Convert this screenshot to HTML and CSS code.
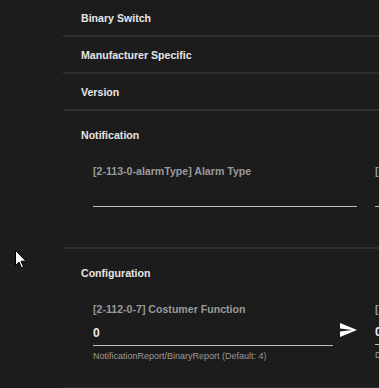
FILE: index.html
```html
<!DOCTYPE html>
<html>
<head>
<meta charset="utf-8">
<link rel="stylesheet" href="styles.css">
</head>
<body>
<div class="page">
  <div class="sidebar"></div>
  <div class="panel">
    <div class="row">Binary Switch</div>
    <div class="row">Manufacturer Specific</div>
    <div class="row">Version</div>
    <div class="section section-first">
      <div class="title">Notification</div>
      <div class="fields">
        <div class="field">
          <div class="label">[2-113-0-alarmType] Alarm Type</div>
          <div class="control"><div class="input"></div></div>
          <div class="helper"></div>
        </div>
        <div class="field">
          <div class="label">[2-113-0-alarmLevel] Alarm Level</div>
          <div class="control"><div class="input"></div></div>
          <div class="helper"></div>
        </div>
      </div>
    </div>
    <div class="section">
      <div class="title">Configuration</div>
      <div class="fields">
        <div class="field">
          <div class="label">[2-112-0-7] Costumer Function</div>
          <div class="control">
            <div class="input">0</div>
            <button class="send" aria-label="send">
              <svg viewBox="2 3 21 18" width="17" height="14" preserveAspectRatio="none"><path d="M2.01 21L23 12 2.01 3 2 10l15 2-15 2z" fill="#fff"/></svg>
            </button>
          </div>
          <div class="helper">NotificationReport/BinaryReport (Default: 4)</div>
        </div>
        <div class="field">
          <div class="label">[2-112-0-8] Other Function</div>
          <div class="control">
            <div class="input">0</div>
          </div>
          <div class="helper">Default: 0</div>
        </div>
      </div>
    </div>
  </div>
</div>
<svg class="cursor" width="13" height="19" viewBox="0 0 13 19"><path d="M0.5 0.5 L0.5 15.5 L4 12 L6.5 18 L8.5 17 L6 11.2 L11 11.2 Z" fill="#fff" stroke="#000" stroke-width="1"/></svg>
</body>
</html>
```
FILE: styles.css
```css
html, body {
  margin: 0;
  padding: 0;
  background: #1c1c1c;
  overflow: hidden;
}
body {
  font-family: "Liberation Sans", Arial, sans-serif;
  color: #e6e6e6;
  width: 379px;
  height: 388px;
  position: relative;
}
.page {
  display: flex;
}
.sidebar {
  width: 63px;
  flex: none;
}
.panel {
  flex: none;
  width: 700px;
}
.row {
  height: 35px;
  display: flex;
  align-items: center;
  padding-left: 18px;
  font-size: 10.6px;
  font-weight: bold;
  border-bottom: 2px solid #2e2e2e;
}
.section {
  padding: 17px 0 25px 18px;
  border-bottom: 2px solid #2e2e2e;
}
.section-first {
  padding-bottom: 24px;
}
.title {
  font-size: 10.6px;
  font-weight: bold;
  line-height: 14px;
}
.fields {
  display: flex;
  gap: 18px;
  margin-top: 22px;
  padding-left: 12px;
}
.field {
  width: 264px;
  flex: none;
}
.label {
  font-size: 10.6px;
  font-weight: bold;
  line-height: 14px;
  color: #9a9a9a;
  white-space: nowrap;
}
.control {
  display: flex;
  align-items: flex-end;
  gap: 7px;
}
.input {
  flex: 1;
  height: 20px;
  line-height: 20px;
  padding: 6px 0 2px;
  border-bottom: 1px solid #bdbdbd;
  font-size: 12px;
  font-weight: bold;
  color: #ededed;
}
.send {
  width: 17px;
  height: 28px;
  padding: 0;
  margin: 0 0 2px;
  border: 0;
  background: none;
  display: flex;
  align-items: center;
  justify-content: center;
}
.send svg {
  display: block;
}
.helper {
  margin-top: 5px;
  height: 11px;
  line-height: 11px;
  font-size: 9px;
  color: #9a9a9a;
  white-space: nowrap;
}
.cursor {
  position: absolute;
  left: 15px;
  top: 250px;
}
```
